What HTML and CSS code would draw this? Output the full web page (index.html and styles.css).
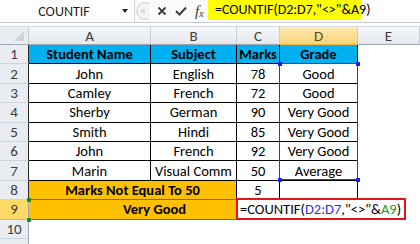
FILE: index.html
```html
<!DOCTYPE html>
<html lang="en">
<head>
    <meta charset="UTF-8">
    <title>COUNTIF not equal</title>
    <link rel="stylesheet" href="styles.css">
</head>
<body>
    <div class="formula-bar">
        <div class="name-box">
            <span class="name">COUNTIF</span>
            <span class="caret"></span>
        </div>
        <div class="fx-tools">
            <svg class="grip" width="14" height="18" viewBox="0 0 14 18">
                <path d="M13 1 H7 A6 8 0 0 0 7 17 H13" fill="#f4f4f4" stroke="#c8c8c8"/>
                <circle cx="7" cy="9" r="2.2" fill="#d8d8d8"/>
            </svg>
            <svg class="tool" width="10" height="10" viewBox="0 0 10 10">
                <path d="M1.5 1.5 L8.5 8.5 M8.5 1.5 L1.5 8.5" stroke="#3a3a3a" stroke-width="1.8"/>
            </svg>
            <svg class="tool" width="12" height="10" viewBox="0 0 12 10">
                <path d="M1 5 L4.5 8.5 L11 1.5" fill="none" stroke="#3a3a3a" stroke-width="2"/>
            </svg>
            <span class="fx">f<sub>x</sub></span>
        </div>
        <div class="formula">
            <span class="marker">=COUNTIF(D2:D7,"&lt;&gt;"&amp;A9)</span>
        </div>
    </div>

    <div class="sheet">
        <div class="row head-row">
            <div class="corner"><span class="tri"></span></div>
            <div class="ch col-a">A</div>
            <div class="ch col-b">B</div>
            <div class="ch col-c">C</div>
            <div class="ch col-d ch-sel">D</div>
            <div class="ch col-e">E</div>
        </div>

        <div class="row">
            <div class="rh edge">1</div>
            <div class="c col-a hd">Student Name</div>
            <div class="c col-b hd">Subject</div>
            <div class="c col-c hd">Marks</div>
            <div class="c col-d hd">Grade</div>
        </div>

        <div class="row">
            <div class="rh edge">2</div>
            <div class="c col-a">John</div>
            <div class="c col-b">English</div>
            <div class="c col-c">78</div>
            <div class="c col-d range-start">
                Good
                <!-- D2:D7 reference highlight -->
                <div class="ref-d">
                    <span class="dot dot-tl blue"></span>
                    <span class="dot dot-tr blue"></span>
                    <span class="dot dot-bl blue"></span>
                    <span class="dot dot-br blue"></span>
                </div>
            </div>
        </div>

        <div class="row">
            <div class="rh edge">3</div>
            <div class="c col-a">Camley</div>
            <div class="c col-b">French</div>
            <div class="c col-c">72</div>
            <div class="c col-d">Good</div>
        </div>

        <div class="row">
            <div class="rh edge">4</div>
            <div class="c col-a">Sherby</div>
            <div class="c col-b">German</div>
            <div class="c col-c">90</div>
            <div class="c col-d">Very Good</div>
        </div>

        <div class="row">
            <div class="rh edge">5</div>
            <div class="c col-a">Smith</div>
            <div class="c col-b">Hindi</div>
            <div class="c col-c">85</div>
            <div class="c col-d">Very Good</div>
        </div>

        <div class="row">
            <div class="rh edge">6</div>
            <div class="c col-a">John</div>
            <div class="c col-b">French</div>
            <div class="c col-c">92</div>
            <div class="c col-d">Very Good</div>
        </div>

        <div class="row">
            <div class="rh edge">7</div>
            <div class="c col-a">Marin</div>
            <div class="c col-b">Visual Comm</div>
            <div class="c col-c">50</div>
            <div class="c col-d">Average</div>
        </div>

        <div class="row">
            <div class="rh edge">8</div>
            <div class="c col-ab orange">Marks Not Equal To 50</div>
            <div class="c col-c">5</div>
            <div class="c col-d"></div>
        </div>

        <div class="row">
            <div class="rh rh-sel">9</div>
            <div class="col-abc orange ref-a9">
                Very Good
                <span class="dot dot-tl green"></span>
                <span class="dot dot-bl green"></span>
                <div class="callout">=COUNTIF(<span class="blue-txt">D2:D7</span>,"&lt;&gt;"&amp;<span class="green-txt">A9</span>)</div>
            </div>
        </div>

        <div class="row">
            <div class="rh">10</div>
        </div>

        <div class="row">
            <div class="rh"></div>
        </div>
    </div>
</body>
</html>
```

FILE: styles.css
```css
body {
    margin: 0;
    background-color: #fff;
    font-family: Carlito, Lato, "Liberation Sans", sans-serif;
    font-size: 14.5px;
    color: #000;
}

/* formula bar */
.formula-bar {
    display: flex;
    height: 22px;
    border-bottom: 1px solid #c6cbd2;
    background-color: #fff;
}

.name-box {
    width: 135px;
    display: flex;
    align-items: center;
    border-right: 1px solid #d4d8de;
    box-sizing: border-box;
}

.name-box .name {
    flex: 1;
    text-align: center;
    padding-left: 6px;
    font-size: 14px;
    color: #1a1a1a;
}

.name-box .caret {
    width: 0;
    height: 0;
    border-left: 3px solid transparent;
    border-right: 3px solid transparent;
    border-top: 4px solid #222;
    margin-right: 6px;
}

.fx-tools {
    width: 73px;
    display: flex;
    align-items: center;
    gap: 8px;
    padding-left: 1px;
    box-sizing: border-box;
    background-color: #fbfbfb;
}

.fx-tools .grip {
    margin-right: -1px;
}

.fx {
    font-family: "Liberation Serif", serif;
    font-style: italic;
    font-size: 15px;
    color: #333;
    line-height: 1;
}

.fx sub {
    font-size: 10px;
    vertical-align: -1px;
}

.formula {
    flex: 1;
    display: flex;
    align-items: flex-start;
}

.formula .marker {
    background-color: #ffff00;
    width: 153px;
    height: 20px;
    line-height: 20px;
    padding-left: 7px;
    box-sizing: border-box;
    font-size: 14px;
    white-space: nowrap;
}

/* sheet */
.sheet {
    margin-top: 3px;
    border-top: 1px solid #d5dae1;
}

.row {
    display: flex;
    height: 19.4px;
}

.head-row {
    height: 18px;
}

.col-a { width: 122px; }
.col-b { width: 86px; }
.col-c { width: 43px; }
.col-d { width: 78px; }
.col-e { flex: 1; }
.col-ab { width: 208px; }
.col-abc { width: 251px; }

.corner,
.ch,
.rh {
    background-color: #e9edf2;
    color: #3c3c3c;
    display: flex;
    align-items: center;
    justify-content: center;
    box-sizing: border-box;
    font-size: 15px;
}

.corner {
    width: 29px;
    position: relative;
    border-right: 1px solid #c3c9d1;
    border-bottom: 1px solid #9ea6b1;
}

.corner .tri {
    position: absolute;
    right: 4px;
    bottom: 3px;
    width: 0;
    height: 0;
    border-left: 10px solid transparent;
    border-bottom: 10px solid #d0d4d9;
}

.ch {
    background: linear-gradient(#f5f7f9, #e4e8ed);
    border-right: 1px solid #c7ccd3;
    border-bottom: 1px solid #9ea6b1;
}

.ch-sel {
    background: linear-gradient(#fdebb0, #f8d477);
    border-bottom: 1px solid #f2b645;
    color: #5a4a20;
}

.rh {
    width: 29px;
    flex-shrink: 0;
    border-right: 1px solid #9ea6b1;
    border-bottom: 1px solid #cdd3db;
}

/* left edge of the bordered table */
.rh.edge {
    border-right-color: #262626;
}

.rh-sel {
    background-color: #ffd966;
    border-bottom-color: #e6b94a;
}

/* cells */
.c {
    display: flex;
    align-items: center;
    justify-content: center;
    flex-shrink: 0;
    box-sizing: border-box;
    border-right: 1px solid #000;
    border-bottom: 1px solid #000;
    white-space: nowrap;
}

.hd {
    background-color: #00b0f0;
    font-weight: bold;
}

.orange {
    background-color: #ffc000;
    font-weight: bold;
}

/* A9:C9 merged, referenced in green */
.ref-a9 {
    position: relative;
    display: flex;
    align-items: center;
    justify-content: center;
    box-sizing: border-box;
    border-top: 1px solid #2a9a2a;
    border-bottom: 1px solid #2a9a2a;
    margin-top: -1px;
    height: 20.4px;
}

/* D2:D7 range highlight */
.range-start {
    position: relative;
}

.ref-d {
    position: absolute;
    left: -1px;
    top: -1px;
    width: 79px;
    height: 117px;
    box-sizing: border-box;
    border: 1px solid #2e2eff;
    z-index: 2;
}

.dot {
    position: absolute;
    width: 4px;
    height: 4px;
}

.dot.blue {
    background-color: #1f1ff0;
}

.dot.green {
    background-color: #1f8a1f;
}

.dot-tl {
    left: -2px;
    top: -2px;
}

.dot-tr {
    right: -3px;
    top: -2px;
}

.dot-bl {
    left: -2px;
    bottom: -3px;
}

.dot-br {
    right: -3px;
    bottom: -3px;
}

/* formula callout over C9 */
.callout {
    position: absolute;
    left: 207px;
    top: -2px;
    width: 170px;
    height: 22px;
    box-sizing: border-box;
    border: 2px solid #e3151b;
    background-color: #fff;
    padding-left: 2px;
    line-height: 18px;
    font-weight: normal;
    white-space: nowrap;
    z-index: 3;
}

.blue-txt {
    color: #2f2fe0;
}

.green-txt {
    color: #1f9a1f;
}
```
